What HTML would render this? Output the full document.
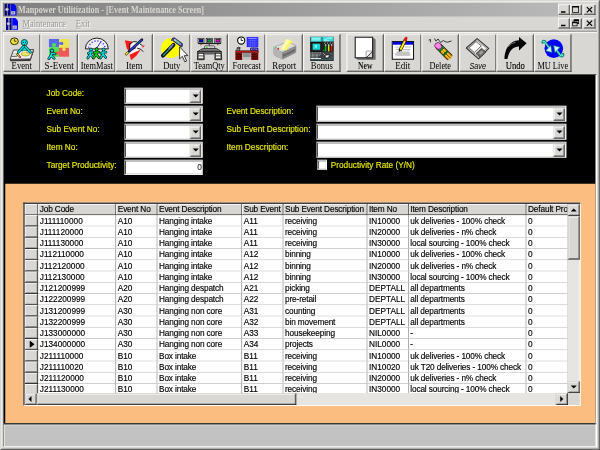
<!DOCTYPE html><html><head><meta charset="utf-8"><title>Manpower Utilitization</title><style>
html,body{margin:0;padding:0;background:#d8d7d3;overflow:hidden}
body{width:600px;height:450px;position:relative;font-family:"Liberation Sans",sans-serif}
#r{position:absolute;left:0;top:0;width:800px;height:600px;transform:scale(.75);transform-origin:0 0;background:#d8d7d3;overflow:hidden;font-size:11px;line-height:13px;color:#000}
#r div,#r span,#r svg{position:absolute;box-sizing:border-box}
.cap{left:4px;top:4px;width:792px;height:17.5px;background:linear-gradient(90deg,#808080 0%,#bcbcbc 100%)}
.ttl{left:24px;top:5.3px;font:bold 12.5px/17px "Liberation Serif",serif;color:#d8d6d0;white-space:nowrap;transform:scaleX(.865);transform-origin:0 0}
.cb{width:16px;height:14px;background:#d8d7d3;border:1px solid;border-color:#fff #404040 #404040 #fff;box-shadow:inset -1px -1px 0 #808080}
.mt{top:25px;font:12.5px/15px "Liberation Serif",serif;color:#969696;text-shadow:1px 1px 0 #fff;white-space:nowrap;transform:scaleX(.9);transform-origin:0 0}
.tb{top:45px;width:50px;height:51px;background:#d8d7d3;border:1px solid;border-color:#fff #404040 #404040 #fff;box-shadow:inset -1px -1px 0 #808080, inset 1px 1px 0 #e8e6e2}
.tb svg{left:8px;top:3px;width:32px;height:32px;overflow:visible}
.tb span{left:-1px;width:50px;top:35px;text-align:center;font:12.5px/14px "Liberation Serif",serif;white-space:nowrap;position:absolute}
.mdi{left:4px;top:98.8px;width:792px;height:467.2px;background:#000;border-left:1px solid #808080;border-top:1px solid #585858;border-right:2px solid #fff;}
.lb{color:#e6e600;white-space:nowrap;font-size:11px;line-height:13px;margin-top:1px}
.cbx{height:21px;background:#fff;border:1px solid;border-color:#808080 #fff #fff #808080;box-shadow:inset 1px 1px 0 #000, inset -1px -1px 0 #d8d7d3}
.dd{right:1px;top:1.5px;width:15px;height:17px;background:#d8d7d3;border:1px solid;border-color:#e8e6e2 #404040 #404040 #e8e6e2;box-shadow:inset -1px -1px 0 #808080, inset 1px 1px 0 #fff}
.dd:after{content:"";position:absolute;left:3px;top:5px;border:4px solid transparent;border-top:4px solid #000;border-bottom:0;}
.or{left:7.3px;top:245.3px;width:787px;height:319px;background:#fbbe80}
.grid{left:30.5px;top:269.5px;width:743.5px;height:271.2px;border:solid;border-width:2px 1px 1px 2px;border-color:#404040 #fff #fff #404040;background:#fff;overflow:hidden;box-shadow:inset 1px 1px 0 #000}
.gi{left:0;top:0;width:740.5px;height:268.2px;overflow:hidden}
.h{top:0;height:15px;background:#d8d7d3;border-right:1.3px solid #101010;border-bottom:1.3px solid #101010;box-shadow:inset 1px 1px 0 #fff;padding:0 0 0 2px;line-height:14px;white-space:nowrap;overflow:hidden;letter-spacing:-.17px}
.s{left:0;width:18.5px;height:15px;background:#d8d7d3;border-right:1.3px solid #000;border-bottom:1.3px solid #000;box-shadow:inset 1px 1px 0 #fff, inset -1px -1px 0 #707070}
.c{height:15px;border-right:1px solid #707070;border-bottom:1px solid #c0c0c0;padding:0 0 0 2px;line-height:14px;white-space:nowrap;overflow:hidden;background:#fff;letter-spacing:-.17px}
.c.n{letter-spacing:0}
#r .grid{-webkit-text-stroke:.2px #000}
.lb{-webkit-text-stroke:.2px #e6e600}
.sbt{background:#e6e5e2}
.sb{width:16px;height:16px;background:#d8d7d3;border:1px solid;border-color:#d8d7d3 #101010 #101010 #d8d7d3;box-shadow:inset -1px -1px 0 #808080, inset 1px 1px 0 #fff}
.st{left:4px;top:565.3px;width:792px;height:30.7px;background:#c2c2c2;border:solid;border-width:1px 2px 1.5px 1px;border-color:#505050 #fff #fff #808080;box-shadow:inset 1px 1px 0 #fff}
</style></head><body><div id="r">
<div style="left:0;top:0;width:800px;height:600px;border:1px solid;border-color:#d8d7d3 #404040 #404040 #d8d7d3;box-shadow:inset 1px 1px 0 #fff, inset -1px -1px 0 #808080"></div>
<div class="cap"></div>
<svg style="left:6px;top:5px;width:16px;height:16px" viewBox="0 0 16 16"><rect x="0" y="0" width="3.2" height="16" fill="#000080"/><rect x="4.6" y="0" width="3" height="16" fill="#000080"/>
<circle cx="3.3" cy="7.6" r="2.5" fill="#d0d0d0" stroke="#000080" stroke-width=".7"/>
<path d="M8.3 0H12.4Q17 3 17 10.5V15.8H8.3Z" fill="#0000ff"/>
<rect x="8.8" y="10" width="5.6" height="4.4" fill="#c8c8d8"/><rect x="10" y="11.3" width="3" height="1.8" fill="#8080a0"/></svg>
<div class="ttl">Manpower Utilitization - [Event Maintenance Screen]</div>
<div style="left:743.5px;top:4px;width:52.5px;height:18px;background:#d8d7d3"></div>
<div class="cb" style="left:744px;top:6px"><svg style="left:0;top:0;width:14px;height:12px" viewBox="0 0 14 12"><rect x="3" y="8" width="6" height="2" fill="#000"/></svg></div>
<div class="cb" style="left:760px;top:6px"><svg style="left:0;top:0;width:14px;height:12px" viewBox="0 0 14 12"><rect x="2.5" y="1.5" width="8" height="8" fill="none" stroke="#000"/><rect x="2" y="1" width="9" height="2" fill="#000"/></svg></div>
<div class="cb" style="left:778px;top:6px"><svg style="left:0;top:0;width:14px;height:12px" viewBox="0 0 14 12"><path d="M3.5 2.5l7 7M10.5 2.5l-7 7" stroke="#000" stroke-width="1.7"/></svg></div>
<svg style="left:8px;top:24px;width:16px;height:16px" viewBox="0 0 16 16"><rect x="0" y="0" width="3.2" height="16" fill="#000080"/><rect x="4.6" y="0" width="3" height="16" fill="#000080"/>
<circle cx="3.3" cy="7.6" r="2.5" fill="#d0d0d0" stroke="#000080" stroke-width=".7"/>
<path d="M8.3 0H12.4Q17 3 17 10.5V15.8H8.3Z" fill="#0000ff"/>
<rect x="8.8" y="10" width="5.6" height="4.4" fill="#c8c8d8"/><rect x="10" y="11.3" width="3" height="1.8" fill="#8080a0"/></svg>
<div class="mt" style="left:30px"><u>M</u>aintenance</div>
<div class="mt" style="left:101px"><u>E</u>xit</div>
<div class="cb" style="left:744px;top:24px"><svg style="left:0;top:0;width:14px;height:12px" viewBox="0 0 14 12"><rect x="3" y="8" width="6" height="2" fill="#000"/></svg></div>
<div class="cb" style="left:760px;top:24px"><svg style="left:0;top:0;width:14px;height:12px" viewBox="0 0 14 12"><rect x="4.5" y="1.5" width="6" height="5" fill="none" stroke="#000"/><rect x="4" y="1" width="7" height="2" fill="#000"/><rect x="2.5" y="4.5" width="6" height="5" fill="#d8d7d3" stroke="#000"/><rect x="2" y="4" width="7" height="2" fill="#000"/></svg></div>
<div class="cb" style="left:778px;top:24px"><svg style="left:0;top:0;width:14px;height:12px" viewBox="0 0 14 12"><path d="M3.5 2.5l7 7M10.5 2.5l-7 7" stroke="#000" stroke-width="1.7"/></svg></div>
<div style="left:4px;top:41px;width:792px;height:2.66px;border-top:1.33px solid #707070;border-bottom:1.33px solid #fff"></div>
<div class="tb" style="left:4px"><svg viewBox="0 0 32 32"><ellipse cx="6.2" cy="6" rx="5.2" ry="4.5" fill="#f4e23c" stroke="#282800" stroke-width="1.3"/><path d="M6.2 6V3.2M6.2 6H8.8" stroke="#202000" stroke-width="1.1" fill="none"/>
<path d="M.4 30.2L27.6 29.6V32.2L.4 32.6Z" fill="#383838"/><path d="M27.6 29.6L31.8 17V19.8L27.6 32.2Z" fill="#202020"/>
<path d="M5 17.8L31.8 17L27.6 29.6L.4 30.2Z" fill="#f0f0f0" stroke="#282828" stroke-width="1.1"/>
<path d="M3.8 23L11 22.6L10 25.4L2.6 25.8Z" fill="#fff" stroke="#707070" stroke-width=".6"/><path d="M2.4 26.4L10 26" stroke="#404040" stroke-width="1"/>
<ellipse cx="20.9" cy="23.2" rx="5.8" ry="2.5" fill="#f0e468" stroke="#707000" stroke-width=".6"/>
<path d="M19.5 12L13.6 18.6H25.4Z" fill="#00dede" stroke="#003838" stroke-width="1"/>
<path d="M18.3 13L11.5 20.6M20.7 13L27.6 20.6" stroke="#003838" stroke-width="3.6" stroke-linecap="round" fill="none"/>
<path d="M18.3 13L11.5 20.6M20.7 13L27.6 20.6" stroke="#00dede" stroke-width="2" stroke-linecap="round" fill="none"/>
<path d="M17.4 18.6H21.6V21H17.4Z" fill="#f0f0a0"/>
<circle cx="19.5" cy="7.8" r="4.1" fill="#00e4e4" stroke="#003838" stroke-width="1.2"/><rect x="17.5" y="6.8" width="1.3" height="1.6" fill="#003838"/><rect x="20.2" y="6.8" width="1.3" height="1.6" fill="#003838"/><rect x="18.7" y="9.8" width="1.6" height="2.4" fill="#602020"/>
<path d="M9 22.2L14 27.2" stroke="#403000" stroke-width="2.3"/><path d="M9 22.2L13.4 26.6" stroke="#f0d020" stroke-width="1.3"/><path d="M13.4 26.6L14.7 27.9" stroke="#e01010" stroke-width="1.7"/></svg><span style="transform:scaleX(0.926);">Event</span></div>
<div class="tb" style="left:54px"><svg viewBox="0 0 32 32"><rect x="2.3" y="3" width="13.4" height="11" fill="#5868e8"/>
<rect x="15.7" y="3" width="13.4" height="11.8" fill="#ece450"/>
<rect x="15.7" y="14.8" width="13.4" height="11.8" fill="#ee5858"/>
<rect x="2.3" y="14" width="13.4" height="12.6" fill="#50e050"/>
<rect x="15" y="7.6" width="3" height="2.6" fill="#5868e8"/><circle cx="19.2" cy="8.9" r="2.2" fill="#5868e8"/>
<rect x="7.6" y="12.4" width="2.8" height="2.4" fill="#50e050"/><circle cx="9" cy="11" r="2.8" fill="#50e050"/>
<rect x="21" y="14" width="2.6" height="2" fill="#ece450"/><circle cx="22.3" cy="16.8" r="2.3" fill="#ece450"/>
<rect x="14.4" y="20.4" width="2" height="2.6" fill="#ee5858"/><circle cx="13.4" cy="21.7" r="2.2" fill="#ee5858"/>
<path d="M6 20.8L5.2 24.6L2 29.2M5.2 24.6L9.2 28.8M6 22L10.4 22.8" stroke="#001c1c" stroke-width="3.6" stroke-linecap="round" stroke-linejoin="round" fill="none"/>
<path d="M6 20.8L5.2 24.6L2 29.2M5.2 24.6L9.2 28.8M6 22L10.4 22.8" stroke="#00e0e0" stroke-width="1.9" stroke-linecap="round" stroke-linejoin="round" fill="none"/>
<circle cx="6.3" cy="18.6" r="2.3" fill="#00e0e0" stroke="#001c1c" stroke-width="1.2"/></svg><span style="transform:scaleX(0.97);">S-Event</span></div>
<div class="tb" style="left:104px"><svg viewBox="0 0 32 32"><path d="M.8 16.2A15.3 14.4 0 0 1 31.4 16.2Z" fill="#f0f0f4" stroke="#181818" stroke-width="1.3"/>
<path d="M5.2 14.6A11 10.4 0 0 1 27 14.6" fill="none" stroke="#2828ff" stroke-width="1.9" stroke-dasharray="1.5 2.5"/>
<path d="M15.8 15.4L21.6 6.6" stroke="#2020b0" stroke-width="1.2"/><circle cx="15.8" cy="15.2" r="1.3" fill="#101070"/>
<g stroke-linecap="round" stroke-linejoin="round" fill="none">
<path d="M8.3 18.6L7.5 23L4.1 28.4M7.5 23L11.1 27.8M8.1 20L4.7 22M8.1 20L11.5 20.6" stroke="#002020" stroke-width="3.4"/><path d="M8.3 18.6L7.5 23L4.1 28.4M7.5 23L11.1 27.8M8.1 20L4.7 22M8.1 20L11.5 20.6" stroke="#00e0e0" stroke-width="1.8"/><path d="M25.2 18.6L24.4 23L21.0 28.4M24.4 23L28.0 27.8M25.0 20L21.6 22M25.0 20L28.4 20.6" stroke="#002020" stroke-width="3.4"/><path d="M25.2 18.6L24.4 23L21.0 28.4M24.4 23L28.0 27.8M25.0 20L21.6 22M25.0 20L28.4 20.6" stroke="#00e0e0" stroke-width="1.8"/><path d="M15.9 18.6L15.1 23L11.7 28.4M15.1 23L18.7 27.8M15.7 20L12.3 22M15.7 20L19.1 20.6" stroke="#001800" stroke-width="3.4"/><path d="M15.9 18.6L15.1 23L11.7 28.4M15.1 23L18.7 27.8M15.7 20L12.3 22M15.7 20L19.1 20.6" stroke="#10d810" stroke-width="1.8"/>
</g>
<circle cx="8.3" cy="17" r="2" fill="#00e0e0" stroke="#002020" stroke-width="1"/><circle cx="25.2" cy="17" r="2" fill="#00e0e0" stroke="#002020" stroke-width="1"/><circle cx="15.9" cy="16.8" r="2.1" fill="#10d810" stroke="#001800" stroke-width="1"/></svg><span style="transform:scaleX(0.89);">ItemMast</span></div>
<div class="tb" style="left:154px"><svg viewBox="0 0 32 32"><path d="M9.6 19L10 9.4L15 6.2L21 7L26 11.4L24.4 14L21 15.6L27.4 19.6L23.4 18.2L10.3 23.6Z" fill="#f2f2f2"/>
<path d="M3.5 4.6L14 6.6L10.2 11.6L10.2 20.6L6 15.8Z" fill="#ff1818"/>
<path d="M9.8 24L24.8 17L18.8 25.2L11.7 31.2Z" fill="#ff1818"/>
<path d="M26.6 12.4L30.4 11L27.6 14.8Z" fill="#ff1818"/>
<path d="M9.8 19.4L10 9.6L15 6.4L19 6.8M20.4 15.4L24.6 16.6L27.6 19.6M24 10L26.6 11.6M12 18L18 14.6" fill="none" stroke="#101010" stroke-width="1.2" stroke-linecap="round"/>
<path d="M26.2 4L9 19.6" stroke="#101020" stroke-width="3.5" stroke-linecap="round"/><path d="M26 4.3L10 18.8" stroke="#2838d8" stroke-width="1.9" stroke-linecap="round"/><path d="M17 11.4L24 5.2" stroke="#107040" stroke-width="1"/>
<path d="M8.2 20.6L4.2 24.2" stroke="#303000" stroke-width="3"/><path d="M8 20.8L4.6 23.8" stroke="#f4e820" stroke-width="1.8"/></svg><span style="transform:scaleX(0.96);">Item</span></div>
<div class="tb" style="left:204px"><svg viewBox="0 0 32 32"><circle cx="15.1" cy="15.2" r="13.6" fill="#ffff00"/>
<path d="M4.2 25.2L18.4 10.8" stroke="#080808" stroke-width="5" stroke-linecap="round"/><path d="M4.8 24.6L17 12.2" stroke="#289898" stroke-width="1.7" stroke-linecap="round"/><path d="M12 16.2L18.4 9.8" stroke="#7080b0" stroke-width="2"/>
<path d="M19.4 4L28.2 10.6" stroke="#202048" stroke-width="5.4" stroke-linecap="round"/><path d="M19.8 4.2L27.8 10.2" stroke="#8494c8" stroke-width="2.8" stroke-linecap="round"/><path d="M22.4 5.6L26 8.4" stroke="#60e080" stroke-width="1.5"/><path d="M19 3.6L21.4 5.2" stroke="#d8dcf0" stroke-width="1.6"/>
<path d="M15.6 5.4Q16.4 2.2 19.6 1.8" stroke="#303878" stroke-width="2" fill="none"/><path d="M28 11.4L29.8 13.6" stroke="#303878" stroke-width="2.4"/></svg><span style="transform:scaleX(0.92);">Duty</span></div>
<div class="tb" style="left:254px"><svg viewBox="0 0 32 32"><g stroke="#181818" stroke-width=".9"><rect x="1" y="2.1" width="8" height="6.2" fill="#f0f0f0"/><rect x="11.9" y="2.1" width="8.2" height="6.2" fill="#f0f0f0"/><rect x="23.3" y="2.1" width="8.2" height="6.2" fill="#f0f0f0"/></g>
<rect x="2.6" y="3.5" width="5" height="3.5" fill="#0000e8" stroke="#000" stroke-width=".8"/><rect x="13.5" y="3.5" width="5.2" height="3.5" fill="#00a040" stroke="#000" stroke-width=".8"/><rect x="24.9" y="3.5" width="5.2" height="3.5" fill="#e800e8" stroke="#000" stroke-width=".8"/>
<rect x="1" y="8.4" width="30.6" height="1.4" fill="#181818"/><path d="M5 9.8V11.4M27.4 9.8V11.4M16 9.8V12" stroke="#202020" stroke-width="1.1"/>
<rect x="9.9" y="12.2" width="13.3" height="4.2" rx="1" fill="#f4f4f4" stroke="#202020" stroke-width="1"/><rect x="11.6" y="14" width="2.4" height="1.6" fill="#00e000"/><rect x="15" y="14.3" width="6.6" height=".9" fill="#a0a0a0"/>
<path d="M7.2 15.8H25.9L32.4 20H.2Z" fill="#a4a4a4" stroke="#101010" stroke-width="1"/><path d="M5 17.9H28" stroke="#202020" stroke-width=".9"/>
<rect x=".4" y="20" width="31.8" height="2.4" fill="#686868" stroke="#101010" stroke-width=".8"/>
<path d="M.6 22.4H9.2V30.6H.2Z" fill="#707070" stroke="#101010" stroke-width="1.1"/><path d="M23.6 22.4H32.2L32.6 30.6H23.6Z" fill="#707070" stroke="#101010" stroke-width="1.1"/>
<path d="M2 23.6H7.8M2 27.2H7.8M25 23.6H30.8M25 27.2H30.8" stroke="#f8f8f8" stroke-width="2"/>
<rect x="9.2" y="22.4" width="14.4" height="1.6" fill="#888"/></svg><span style="transform:scaleX(0.895);">TeamQty</span></div>
<div class="tb" style="left:304px"><svg viewBox="0 0 32 32"><circle cx="8.6" cy="5" r="4.8" fill="#fff" stroke="#000" stroke-width="1.4"/><path d="M8.6 5V2M8.6 5H11.2" stroke="#000" stroke-width="1.1" fill="none"/>
<rect x="15.9" y=".3" width="15.5" height="13.5" fill="#2c2cff"/><rect x="18" y="1.6" width="11.4" height="1.2" fill="#a0a0ff"/>
<path d="M18 5H29.4M18 7.4H29.4M18 9.8H29.4M18 12.2H29.4M20.8 3.6V13.4M23.7 3.6V13.4M26.6 3.6V13.4" stroke="#6868ff" stroke-width=".7"/>
<path d="M2 18.7L4 15.4H7L6 18.7M2.4 15.4Q4.6 13 7.6 14.6" stroke="#282828" stroke-width="1.2" fill="#a0a0a0"/>
<rect x="21.2" y="15.2" width="9.6" height="3.4" rx="1.2" fill="#f0f0ff" stroke="#101090" stroke-width="1.5"/><path d="M22.6 17H29.4" stroke="#101090" stroke-width="1"/>
<rect x=".9" y="18.7" width="30.8" height="2.5" fill="#b01818" stroke="#300000" stroke-width=".6"/>
<rect x=".8" y="21.2" width="9.2" height="9.8" fill="#780a0a"/><rect x="22" y="21.2" width="9.4" height="9.8" fill="#780a0a"/>
<path d="M2.4 23.4H9.6M2.4 26H9.6M2.4 28.6H9.6M22.6 23.4H30.2M22.6 26H30.2M22.6 28.6H30.2" stroke="#200000" stroke-width="1.1" stroke-dasharray="1.4 1"/>
<rect x="10.8" y="21.6" width="10.6" height="9.4" fill="#c4c4c4"/><rect x="11" y="21.8" width="10.2" height="5.4" fill="#909090"/></svg><span style="transform:scaleX(0.895);">Forecast</span></div>
<div class="tb" style="left:354px"><svg viewBox="0 0 32 32"><path d="M2.5 13.5Q1.5 14 1.8 15.5V23Q2 24.6 3.5 25.4L12 29.6Q13.5 30.2 15 29.6L30.5 22Q32 21 32 19.4V13Q32 11.6 30.6 11L21 7.6Q19.8 7.2 18.6 7.6Z" fill="#8c8c8c"/>
<path d="M2.5 13.5L18.6 7.6Q19.8 7.2 21 7.6L30.6 11Q32 11.8 30.6 12.6L14.6 20Q13.2 20.6 11.8 20L2.6 15.4Q1.4 14.4 2.5 13.5Z" fill="#dedede" stroke="#888" stroke-width=".6"/>
<path d="M1.8 15.5V23Q2 24.6 3.5 25.4L12 29.6Q13 30 13.2 30V20.6Q12.4 20.4 11.8 20L2.6 15.4Z" fill="#b4b4b4"/>
<path d="M14 22.4L30.4 14.6V19.4L14 27.4Z" fill="#6c6c6c"/><path d="M14.6 22.6L30 15.4" stroke="#b0b0b0" stroke-width=".9"/>
<path d="M11.5 16.8L17.6 5Q19 2.6 21 3.4L28 6.4L24.6 9.2L19 18.4Z" fill="#f8f466"/><path d="M11.5 16.8L18 4.6Q19 3 20.4 3.2L23.4 4.6L15.6 17.8Z" fill="#fdfbb0"/>
<circle cx="5" cy="14.8" r="1.1" fill="#00d040"/><circle cx="8" cy="16" r="1.2" fill="#e81010"/></svg><span style="transform:scaleX(0.94);">Report</span></div>
<div class="tb" style="left:404px"><svg viewBox="0 0 32 32"><rect x=".5" y="0" width="31.4" height="32" fill="#484c50"/>
<rect x="1.6" y=".2" width="14" height="6.2" fill="#38dede"/><rect x="17" y=".2" width="14.4" height="6.2" fill="#38dede"/>
<path d="M3 2H14M3 4.2H14M19 4.8L24 2L30 1.6M19 5.4H26" stroke="#d0ffff" stroke-width="1" fill="none"/>
<rect x=".8" y="7" width="16.4" height="13.2" fill="#0c0c0c"/><rect x="2.4" y="8.2" width="13.2" height="10.6" fill="#303030"/><rect x="4" y="9.4" width="9.6" height="7.8" fill="#10dcdc"/><rect x="7.6" y="11" width="1.4" height="3.6" fill="#fff"/>
<rect x="17.2" y="6.6" width="14.6" height="13.6" fill="#242424"/>
<path d="M19.4 9L21 7.6M23 9L24.6 7.6M26.8 9L28.4 7.6M30.4 9L31.4 8" stroke="#fff" stroke-width=".9"/>
<rect x="20.2" y="11.8" width="1.9" height="7.6" fill="#00c000"/><rect x="24.3" y="11.8" width="1.9" height="7.6" fill="#e4e400"/><rect x="28.2" y="11.8" width="1.9" height="7.6" fill="#e00808"/>
<rect x="20.2" y="10.2" width="1.9" height="1.6" fill="#fff"/><rect x="24.3" y="10.2" width="1.9" height="1.6" fill="#fff"/><rect x="28.2" y="10.2" width="1.9" height="1.6" fill="#fff"/>
<rect x="18.4" y="17.4" width="1" height="1.6" fill="#30d0d0"/>
<rect x=".8" y="20.4" width="31" height="10.4" fill="#3c4044"/>
<path d="M1 21.4H16" stroke="#e8e8e8" stroke-width=".9" stroke-dasharray="1.2 .9"/>
<path d="M1.2 23.4H14.6M1.2 25.2H13.4M1.2 27H12" stroke="#e0e0e0" stroke-width="1" stroke-dasharray="1 .8"/>
<path d="M1 29H15" stroke="#f4f4f4" stroke-width="1.2"/>
<path d="M18 22L21.4 25.4" stroke="#d0d0d0" stroke-width="1"/>
<ellipse cx="23.2" cy="26.2" rx="3" ry="2" fill="#f8f8f8" stroke="#080808" stroke-width=".9" transform="rotate(-22 23.2 26.2)"/>
<path d="M27 22L31 24M26 29L31 27" stroke="#389898" stroke-width="1.2" stroke-dasharray="1 1"/>
<path d="M1 30.8H31" stroke="#30a0a0" stroke-width="1" stroke-dasharray="1.2 .8"/><rect x=".5" y="31.4" width="31.4" height=".8" fill="#080808"/></svg><span style="transform:scaleX(0.926);">Bonus</span></div>
<div class="tb" style="left:462px"><svg viewBox="0 0 32 32"><path d="M6 3.4H29.6V30.6H6Z" fill="#989898"/><path d="M26.4 1L29.6 3.4V30.6L26.4 28.4Z" fill="#707070"/><path d="M3 28.2L6 30.6H29.6L26.4 28.2Z" fill="#707070"/>
<path d="M2.6 .6H25.8V28H2.6Z" fill="#fff" stroke="#181818" stroke-width="1.4"/>
<path d="M17.4 19.4H25.8V28H17.4Z" fill="#d8d7d3" stroke="#181818" stroke-width="1.2"/><path d="M17.4 19.4V27.4L25.2 19.4Z" fill="#fff"/><path d="M17.4 27.8L25.6 19.6" stroke="#181818" stroke-width="1.1"/></svg><span style="transform:scaleX(0.82);font-weight:bold;color:#202020;">New</span></div>
<div class="tb" style="left:512px"><svg viewBox="0 0 32 32"><rect x="2" y="6.4" width="28.4" height="23.6" fill="#fff" stroke="#080808" stroke-width="1.3"/><rect x="2.6" y="7" width="27.2" height="3.6" fill="#0000e0"/>
<rect x="6" y="13" width="7" height="1.4" fill="#c8c8c8"/><rect x="6" y="16" width="6" height="1.4" fill="#c8c8c8"/><rect x="19" y="13" width="8" height="1.4" fill="#c8c8c8"/><rect x="16" y="16.4" width="10" height="1.6" fill="#b8b8b8"/>
<rect x="8" y="19.6" width="17" height="5.6" fill="#c4c4c4"/><rect x="6" y="22" width="20" height="3.2" fill="#c4c4c4"/>
<path d="M19.8 3.4L12.2 18.6" stroke="#101000" stroke-width="4.2"/><path d="M19.6 4L12.6 18" stroke="#ffee00" stroke-width="2.4"/>
<path d="M20.6 1.8L19.4 4.2" stroke="#e01010" stroke-width="3.6" stroke-linecap="round"/>
<path d="M13.6 17.6L10.8 20.8L10.9 16.4Z" fill="#101010"/></svg><span style="transform:scaleX(0.96);">Edit</span></div>
<div class="tb" style="left:562px"><svg viewBox="0 0 32 32"><path d="M.6 4.6L3 3.6V7.4M8.6 2.4Q10 7.6 11.6 4.4Q13.2 1.2 14.6 5.2Q16.4 9.4 18.4 6.2Q20.4 3.6 22.4 6.6Q25 8.4 31 5.6" stroke="#101010" stroke-width="1.1" fill="none"/>
<path d="M13.4 12.4L29 28" stroke="#181000" stroke-width="9.6" stroke-linecap="butt"/>
<path d="M18.6 17.6L29.6 28.6" stroke="#e08810" stroke-width="7.4"/><path d="M19.6 16.6L30.4 27.4M17.6 18.6L28.6 29.6" stroke="#f8d020" stroke-width="1.6"/><path d="M21 20L29.6 28.6" stroke="#603000" stroke-width="1.1"/>
<path d="M16 15L18.4 17.4" stroke="#108828" stroke-width="8.6"/><path d="M22 21L24 23" stroke="#0c6c20" stroke-width="8.6"/>
<ellipse cx="13.3" cy="12.4" rx="4.9" ry="4.3" fill="#ff86e6" stroke="#402040" stroke-width=".9" transform="rotate(45 13.3 12.4)"/><path d="M10.4 13.6Q12 16.4 15.2 15.6" stroke="#c040b0" stroke-width="1.1" fill="none"/></svg><span style="transform:scaleX(0.88);">Delete</span></div>
<div class="tb" style="left:612px"><svg viewBox="0 0 32 32"><path d="M15.2 2.4L30.6 15.4L17 29.6L.8 15Z" fill="#dedede" stroke="#303030" stroke-width="1.4" stroke-linejoin="round"/>
<path d="M15.2 4.8L28 15.4L16.9 27L3.4 15Z" fill="none" stroke="#707070" stroke-width=".8"/>
<path d="M4.6 14.8L13.8 6.4L20.6 12.2L11.4 21Z" fill="#fff" stroke="#404040" stroke-width=".9"/>
<path d="M13.8 22.4L21.2 15.6L26.8 20.6L19.6 27.4Z" fill="#6c6c6c" stroke="#282828" stroke-width=".9"/><path d="M17.2 22L21.2 18.4L23.6 20.6L19.6 24.2Z" fill="#a0a0a0"/>
<path d="M21.8 13L25 16" stroke="#fff" stroke-width="1.6"/></svg><span style="transform:scaleX(0.75);font:italic 13px/14px 'Liberation Sans',sans-serif;">Save</span></div>
<div class="tb" style="left:662px"><svg viewBox="0 0 32 32"><path d="M1.6 29.6C1.6 17 8 5 21 4.6V.4L31.2 8.7L21 18.2V12.9C13 13 8 18 5.6 29.6Z" fill="#040404"/><path d="M6.4 13.6Q10.4 8.4 16.4 7.2" stroke="#b0b0b0" stroke-width=".9" fill="none"/></svg><span style="transform:scaleX(0.92);-webkit-text-stroke:.18px #000;">Undo</span></div>
<div class="tb" style="left:712px"><svg viewBox="0 0 32 32"><circle cx="17.4" cy="15.8" r="12.4" fill="#0000ff"/>
<g fill="none" stroke-linecap="round"><path d="M2.6 7.6Q3 4.6 5.6 6.4L12 16" stroke="#007860" stroke-width="3.4"/><path d="M3 7.2Q3.4 5.4 5.6 6.8L12 16" stroke="#58f8e0" stroke-width="1.5"/>
<path d="M29.8 23.4Q29.6 27 26.6 25.6L20 16.4" stroke="#007860" stroke-width="3.4"/><path d="M29.4 23.8Q29.2 26.2 26.6 25.2L20 16.4" stroke="#58f8e0" stroke-width="1.5"/></g>
<path d="M15 21L6.6 18.6L13.4 11.8Z" fill="#c8fff8" stroke="#007860" stroke-width=".8"/><path d="M17.2 11.6L25.6 14L19 21Z" fill="#c8fff8" stroke="#007860" stroke-width=".8"/></svg><span style="transform:scaleX(0.885);">MU Live</span></div>
<div class="mdi"></div>
<div class="lb" style="left:62px;top:117px">Job Code:</div>
<div class="lb" style="left:62px;top:141px">Event No:</div>
<div class="lb" style="left:62px;top:165px">Sub Event No:</div>
<div class="lb" style="left:62px;top:189px">Item No:</div>
<div class="lb" style="left:62px;top:213px">Target Productivity:</div>
<div class="lb" style="left:302px;top:141px">Event Description:</div>
<div class="lb" style="left:302px;top:165px">Sub Event Description:</div>
<div class="lb" style="left:302px;top:189px">Item Description:</div>
<div class="cbx" style="left:166px;top:117px;width:104px"><div class="dd"></div></div>
<div class="cbx" style="left:166px;top:141px;width:104px"><div class="dd"></div></div>
<div class="cbx" style="left:166px;top:165px;width:104px"><div class="dd"></div></div>
<div class="cbx" style="left:166px;top:189px;width:104px"><div class="dd"></div></div>
<div class="cbx" style="left:422px;top:141px;width:333px"><div class="dd"></div></div>
<div class="cbx" style="left:422px;top:165px;width:333px"><div class="dd"></div></div>
<div class="cbx" style="left:422px;top:189px;width:333px"><div class="dd"></div></div>
<div class="cbx" style="left:166px;top:213px;width:104px;height:20px"><div style="right:0px;top:3px;line-height:13px">0</div></div>
<div style="left:423px;top:213px;width:13px;height:13px;background:#fff;border:1px solid;border-color:#808080 #fff #fff #808080;box-shadow:inset 1px 1px 0 #404040, inset -1px -1px 0 #d8d7d3"></div>
<div class="lb" style="left:441px;top:213px">Productivity Rate (Y/N)</div>
<div class="or"></div>
<div class="grid"><div class="gi"><div class="h" style="left:0;width:18.5px"></div><div class="h" style="left:18.5px;width:104px">Job Code</div><div class="h" style="left:122.5px;width:55px">Event No</div><div class="h" style="left:177.5px;width:113px">Event Description</div><div class="h" style="left:290.5px;width:55px">Sub Event</div><div class="h" style="left:345.5px;width:112px">Sub Event Description</div><div class="h" style="left:457.5px;width:55px">Item No</div><div class="h" style="left:512.5px;width:157px">Item Description</div><div class="h" style="left:669.5px;width:56px">Default Pro</div><div class="s" style="top:15px"></div><div class="c n" style="left:18.5px;top:15px;width:104px">J111110000</div><div class="c n" style="left:122.5px;top:15px;width:55px">A10</div><div class="c" style="left:177.5px;top:15px;width:113px">Hanging intake</div><div class="c n" style="left:290.5px;top:15px;width:55px">A11</div><div class="c" style="left:345.5px;top:15px;width:112px">receiving</div><div class="c n" style="left:457.5px;top:15px;width:55px">IN10000</div><div class="c" style="left:512.5px;top:15px;width:157px">uk deliveries - 100% check</div><div class="c n" style="left:669.5px;top:15px;width:56px">0</div><div class="s" style="top:30px"></div><div class="c n" style="left:18.5px;top:30px;width:104px">J111120000</div><div class="c n" style="left:122.5px;top:30px;width:55px">A10</div><div class="c" style="left:177.5px;top:30px;width:113px">Hanging intake</div><div class="c n" style="left:290.5px;top:30px;width:55px">A11</div><div class="c" style="left:345.5px;top:30px;width:112px">receiving</div><div class="c n" style="left:457.5px;top:30px;width:55px">IN20000</div><div class="c" style="left:512.5px;top:30px;width:157px">uk deliveries - n% check</div><div class="c n" style="left:669.5px;top:30px;width:56px">0</div><div class="s" style="top:45px"></div><div class="c n" style="left:18.5px;top:45px;width:104px">J111130000</div><div class="c n" style="left:122.5px;top:45px;width:55px">A10</div><div class="c" style="left:177.5px;top:45px;width:113px">Hanging intake</div><div class="c n" style="left:290.5px;top:45px;width:55px">A11</div><div class="c" style="left:345.5px;top:45px;width:112px">receiving</div><div class="c n" style="left:457.5px;top:45px;width:55px">IN30000</div><div class="c" style="left:512.5px;top:45px;width:157px">local sourcing - 100% check</div><div class="c n" style="left:669.5px;top:45px;width:56px">0</div><div class="s" style="top:60px"></div><div class="c n" style="left:18.5px;top:60px;width:104px">J112110000</div><div class="c n" style="left:122.5px;top:60px;width:55px">A10</div><div class="c" style="left:177.5px;top:60px;width:113px">Hanging intake</div><div class="c n" style="left:290.5px;top:60px;width:55px">A12</div><div class="c" style="left:345.5px;top:60px;width:112px">binning</div><div class="c n" style="left:457.5px;top:60px;width:55px">IN10000</div><div class="c" style="left:512.5px;top:60px;width:157px">uk deliveries - 100% check</div><div class="c n" style="left:669.5px;top:60px;width:56px">0</div><div class="s" style="top:75px"></div><div class="c n" style="left:18.5px;top:75px;width:104px">J112120000</div><div class="c n" style="left:122.5px;top:75px;width:55px">A10</div><div class="c" style="left:177.5px;top:75px;width:113px">Hanging intake</div><div class="c n" style="left:290.5px;top:75px;width:55px">A12</div><div class="c" style="left:345.5px;top:75px;width:112px">binning</div><div class="c n" style="left:457.5px;top:75px;width:55px">IN20000</div><div class="c" style="left:512.5px;top:75px;width:157px">uk deliveries - n% check</div><div class="c n" style="left:669.5px;top:75px;width:56px">0</div><div class="s" style="top:90px"></div><div class="c n" style="left:18.5px;top:90px;width:104px">J112130000</div><div class="c n" style="left:122.5px;top:90px;width:55px">A10</div><div class="c" style="left:177.5px;top:90px;width:113px">Hanging intake</div><div class="c n" style="left:290.5px;top:90px;width:55px">A12</div><div class="c" style="left:345.5px;top:90px;width:112px">binning</div><div class="c n" style="left:457.5px;top:90px;width:55px">IN30000</div><div class="c" style="left:512.5px;top:90px;width:157px">local sourcing - 100% check</div><div class="c n" style="left:669.5px;top:90px;width:56px">0</div><div class="s" style="top:105px"></div><div class="c n" style="left:18.5px;top:105px;width:104px">J121200999</div><div class="c n" style="left:122.5px;top:105px;width:55px">A20</div><div class="c" style="left:177.5px;top:105px;width:113px">Hanging despatch</div><div class="c n" style="left:290.5px;top:105px;width:55px">A21</div><div class="c" style="left:345.5px;top:105px;width:112px">picking</div><div class="c n" style="left:457.5px;top:105px;width:55px">DEPTALL</div><div class="c" style="left:512.5px;top:105px;width:157px">all departments</div><div class="c n" style="left:669.5px;top:105px;width:56px">0</div><div class="s" style="top:120px"></div><div class="c n" style="left:18.5px;top:120px;width:104px">J122200999</div><div class="c n" style="left:122.5px;top:120px;width:55px">A20</div><div class="c" style="left:177.5px;top:120px;width:113px">Hanging despatch</div><div class="c n" style="left:290.5px;top:120px;width:55px">A22</div><div class="c" style="left:345.5px;top:120px;width:112px">pre-retail</div><div class="c n" style="left:457.5px;top:120px;width:55px">DEPTALL</div><div class="c" style="left:512.5px;top:120px;width:157px">all departments</div><div class="c n" style="left:669.5px;top:120px;width:56px">0</div><div class="s" style="top:135px"></div><div class="c n" style="left:18.5px;top:135px;width:104px">J131200999</div><div class="c n" style="left:122.5px;top:135px;width:55px">A30</div><div class="c" style="left:177.5px;top:135px;width:113px">Hanging non core</div><div class="c n" style="left:290.5px;top:135px;width:55px">A31</div><div class="c" style="left:345.5px;top:135px;width:112px">counting</div><div class="c n" style="left:457.5px;top:135px;width:55px">DEPTALL</div><div class="c" style="left:512.5px;top:135px;width:157px">all departments</div><div class="c n" style="left:669.5px;top:135px;width:56px">0</div><div class="s" style="top:150px"></div><div class="c n" style="left:18.5px;top:150px;width:104px">J132200999</div><div class="c n" style="left:122.5px;top:150px;width:55px">A30</div><div class="c" style="left:177.5px;top:150px;width:113px">Hanging non core</div><div class="c n" style="left:290.5px;top:150px;width:55px">A32</div><div class="c" style="left:345.5px;top:150px;width:112px">bin movement</div><div class="c n" style="left:457.5px;top:150px;width:55px">DEPTALL</div><div class="c" style="left:512.5px;top:150px;width:157px">all departments</div><div class="c n" style="left:669.5px;top:150px;width:56px">0</div><div class="s" style="top:165px"></div><div class="c n" style="left:18.5px;top:165px;width:104px">J133000000</div><div class="c n" style="left:122.5px;top:165px;width:55px">A30</div><div class="c" style="left:177.5px;top:165px;width:113px">Hanging non core</div><div class="c n" style="left:290.5px;top:165px;width:55px">A33</div><div class="c" style="left:345.5px;top:165px;width:112px">housekeeping</div><div class="c n" style="left:457.5px;top:165px;width:55px">NIL0000</div><div class="c" style="left:512.5px;top:165px;width:157px">-</div><div class="c n" style="left:669.5px;top:165px;width:56px">0</div><div class="s" style="top:180px"><svg style="left:6px;top:2.4px;width:7.6px;height:10px" viewBox="0 0 7 9"><path d="M0.5 0L6.5 4.5L0.5 9z" fill="#000"/></svg></div><div class="c n" style="left:18.5px;top:180px;width:104px">J134000000</div><div class="c n" style="left:122.5px;top:180px;width:55px">A30</div><div class="c" style="left:177.5px;top:180px;width:113px">Hanging non core</div><div class="c n" style="left:290.5px;top:180px;width:55px">A34</div><div class="c" style="left:345.5px;top:180px;width:112px">projects</div><div class="c n" style="left:457.5px;top:180px;width:55px">NIL0000</div><div class="c" style="left:512.5px;top:180px;width:157px">-</div><div class="c n" style="left:669.5px;top:180px;width:56px">0</div><div class="s" style="top:195px"></div><div class="c n" style="left:18.5px;top:195px;width:104px">J211110000</div><div class="c n" style="left:122.5px;top:195px;width:55px">B10</div><div class="c" style="left:177.5px;top:195px;width:113px">Box intake</div><div class="c n" style="left:290.5px;top:195px;width:55px">B11</div><div class="c" style="left:345.5px;top:195px;width:112px">receiving</div><div class="c n" style="left:457.5px;top:195px;width:55px">IN10000</div><div class="c" style="left:512.5px;top:195px;width:157px">uk deliveries - 100% check</div><div class="c n" style="left:669.5px;top:195px;width:56px">0</div><div class="s" style="top:210px"></div><div class="c n" style="left:18.5px;top:210px;width:104px">J211110020</div><div class="c n" style="left:122.5px;top:210px;width:55px">B10</div><div class="c" style="left:177.5px;top:210px;width:113px">Box intake</div><div class="c n" style="left:290.5px;top:210px;width:55px">B11</div><div class="c" style="left:345.5px;top:210px;width:112px">receiving</div><div class="c n" style="left:457.5px;top:210px;width:55px">IN10020</div><div class="c" style="left:512.5px;top:210px;width:157px">uk T20 deliveries - 100% check</div><div class="c n" style="left:669.5px;top:210px;width:56px">0</div><div class="s" style="top:225px"></div><div class="c n" style="left:18.5px;top:225px;width:104px">J211120000</div><div class="c n" style="left:122.5px;top:225px;width:55px">B10</div><div class="c" style="left:177.5px;top:225px;width:113px">Box intake</div><div class="c n" style="left:290.5px;top:225px;width:55px">B11</div><div class="c" style="left:345.5px;top:225px;width:112px">receiving</div><div class="c n" style="left:457.5px;top:225px;width:55px">IN20000</div><div class="c" style="left:512.5px;top:225px;width:157px">uk deliveries - n% check</div><div class="c n" style="left:669.5px;top:225px;width:56px">0</div><div class="s" style="top:240px"></div><div class="c n" style="left:18.5px;top:240px;width:104px">J211130000</div><div class="c n" style="left:122.5px;top:240px;width:55px">B10</div><div class="c" style="left:177.5px;top:240px;width:113px">Box intake</div><div class="c n" style="left:290.5px;top:240px;width:55px">B11</div><div class="c" style="left:345.5px;top:240px;width:112px">receiving</div><div class="c n" style="left:457.5px;top:240px;width:55px">IN30000</div><div class="c" style="left:512.5px;top:240px;width:157px">local sourcing - 100% check</div><div class="c n" style="left:669.5px;top:240px;width:56px">0</div><div class="sbt" style="left:724.5px;top:0;width:16px;height:252.5px"></div><div class="sbt" style="left:0;top:252.5px;width:741px;height:16px"></div><div style="left:724.5px;top:252.5px;width:16px;height:16px;background:#d8d7d3"></div><div class="sb" style="left:724.5px;top:0"><svg style="left:0;top:0;width:14px;height:14px" viewBox="0 0 14 14"><path d="M3 9L7 5L11 9z" fill="#000"/></svg></div><div class="sb" style="left:724.5px;top:16px;height:58px"></div><div class="sb" style="left:724.5px;top:236.5px"><svg style="left:0;top:0;width:14px;height:14px" viewBox="0 0 14 14"><path d="M3 5L7 9L11 5z" fill="#000"/></svg></div><div class="sb" style="left:0;top:252.5px"><svg style="left:0;top:0;width:14px;height:14px" viewBox="0 0 14 14"><path d="M8 3L4 7L8 11z" fill="#000"/></svg></div><div class="sb" style="left:708.5px;top:252.5px"><svg style="left:0;top:0;width:14px;height:14px" viewBox="0 0 14 14"><path d="M5 3L9 7L5 11z" fill="#000"/></svg></div><div class="sb" style="left:16px;top:252.5px;width:346.5px"></div></div></div>
<div class="st"></div>
<svg style="left:239px;top:62px;width:13px;height:22px;overflow:visible" viewBox="0 0 13 22"><path d="M0.5 0.5V16.5L4.2 13L7.4 20.4L9.8 19.4L6.7 12.2H11.5z" fill="#fff" stroke="#000" stroke-width="1"/></svg>
</div></body></html>
